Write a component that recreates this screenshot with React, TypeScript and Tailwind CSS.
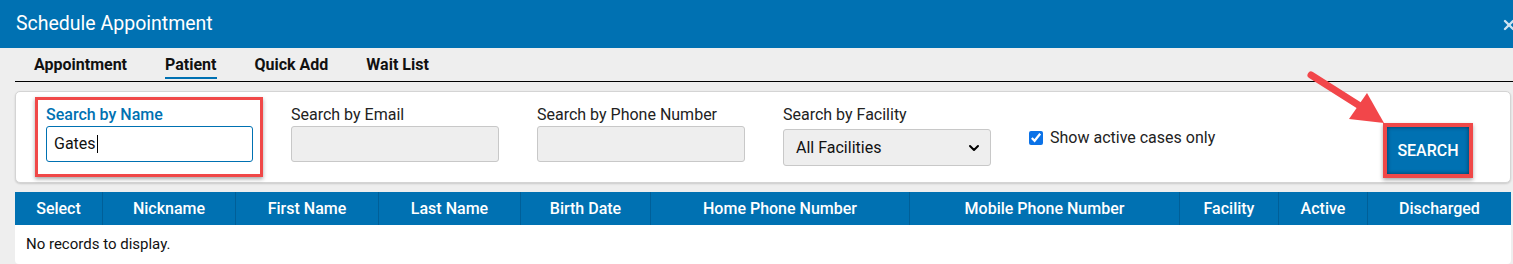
import { ChevronDown, X } from "lucide-react";

const tabs = ["Appointment", "Patient", "Quick Add", "Wait List"];

const columns = [
  { label: "Select", w: "w-[88px]" },
  { label: "Nickname", w: "w-[133px]" },
  { label: "First Name", w: "w-[143px]" },
  { label: "Last Name", w: "w-[142px]" },
  { label: "Birth Date", w: "w-[130px]" },
  { label: "Home Phone Number", w: "w-[259px]" },
  { label: "Mobile Phone Number", w: "w-[270px]" },
  { label: "Facility", w: "w-[99px]" },
  { label: "Active", w: "w-[89px]" },
  { label: "Discharged", w: "w-[143px]" },
];

function Field({ label, children }: { label: string; children: React.ReactNode }) {
  return (
    <div className="w-[208px] shrink-0">
      <div className="h-[20px] leading-[20px] mt-[1px] text-[16px] text-[#222]">{label}</div>
      {children}
    </div>
  );
}

export default function App() {
  return (
    <div
      className="relative w-[1513px] h-[264px] overflow-hidden bg-[#eeeeee]"
      style={{ fontFamily: "Roboto, 'Noto Sans', sans-serif" }}
    >
      {/* title bar */}
      <div className="h-[48px] bg-[#0071b2] flex items-center justify-between pl-[16px]">
        <span className="text-white text-[19.5px] leading-none">Schedule Appointment</span>
        <X className="w-[16px] h-[16px] text-[#cfe3f0] -mr-[4px] mt-[2px]" strokeWidth={3.5} />
      </div>

      {/* tabs */}
      <div className="ml-[15px] h-[34px] border-b border-black flex">
        {tabs.map((t) => (
          <div key={t} className="px-[19px] h-[33px] flex flex-col">
            <div className="flex-1 flex items-center pt-[5px] text-[16px] font-bold text-[#111]">{t}</div>
            <div className={`h-[3px] mb-[2px] ${t === "Patient" ? "bg-[#0071b2]" : ""}`} />
          </div>
        ))}
      </div>

      {/* search panel */}
      <div className="ml-[15px] mt-[9px] w-[1496px] h-[92px] bg-white border border-[#d4d4d4] rounded-[5px] shadow-[0_1px_2px_rgba(0,0,0,0.15)] flex items-start pl-[30px] pr-[37px] pt-[12px]">
        <div className="relative w-[207px] shrink-0 mr-[38px]">
          <div className="h-[20px] leading-[20px] mt-[1px] text-[16px] font-medium text-[#0071b2]">Search by Name</div>
          <div className="mt-[1px] h-[36px] border border-[#0071b2] rounded-[3px] flex items-center pl-[7px] text-[16px] text-[#111]">
            Gates
            <span className="ml-[1px] w-px h-[18px] bg-black" />
          </div>
          <div className="absolute -left-[11px] -top-[7px] -right-[10px] -bottom-[15px] border-[3px] border-[#f04848] shadow-[0_2px_4px_rgba(0,0,0,0.35)] pointer-events-none" />
        </div>

        <div className="mr-[38px]">
          <Field label="Search by Email">
            <div className="mt-[1px] h-[36px] bg-[#eeeeee] border border-[#c8c8c8] rounded-[3px]" />
          </Field>
        </div>
        <div className="mr-[38px]">
          <Field label="Search by Phone Number">
            <div className="mt-[1px] h-[36px] bg-[#eeeeee] border border-[#c8c8c8] rounded-[3px]" />
          </Field>
        </div>
        <div className="mr-[38px]">
          <Field label="Search by Facility">
            <div className="mt-[4px] h-[37px] bg-[#eeeeee] border border-[#c8c8c8] rounded-[3px] flex items-center justify-between pl-[12px] pr-[8px] text-[16px] text-[#111]">
              All Facilities
              <ChevronDown className="w-[16px] h-[16px] text-black" strokeWidth={3} />
            </div>
          </Field>
        </div>

        <label className="mt-[23px] h-[22px] flex items-center gap-[7px] text-[16px] text-[#222]">
          <input type="checkbox" defaultChecked className="w-[14px] h-[14px] m-0 accent-[#0b72e7]" />
          Show active cases only
        </label>

        <div className="ml-auto mt-[19px] border-[4px] border-[#f04848] shadow-[0_2px_4px_rgba(0,0,0,0.35)]">
          <button className="block w-[82px] h-[47px] bg-[#0071b2] text-white text-[16px] font-medium shadow-[inset_0_0_4px_rgba(0,0,0,0.5)]">
            SEARCH
          </button>
        </div>
      </div>

      {/* annotation arrow */}
      <svg className="absolute left-[1300px] top-[64px]" width="100" height="70" viewBox="0 0 100 70">
        <line x1="11" y1="11" x2="60" y2="42" stroke="#f2464a" strokeWidth="7" strokeLinecap="round" />
        <polygon points="49,55 67,29 84,59" fill="#f2464a" />
      </svg>

      {/* results table */}
      <div className="ml-[15px] mt-[9px] w-[1496px] bg-white rounded-b-[4px]">
        <div className="h-[33px] bg-[#0071b2] flex">
          {columns.map((c, i) => (
            <div
              key={c.label}
              className={`${c.w} shrink-0 flex items-center justify-center text-white text-[16px] font-medium ${
                i < columns.length - 1 ? "border-r border-[#005f98]" : ""
              }`}
            >
              {c.label}
            </div>
          ))}
        </div>
        <div className="h-[39px] flex items-center pl-[11px] text-[15px] text-[#111]">No records to display.</div>
      </div>
    </div>
  );
}
